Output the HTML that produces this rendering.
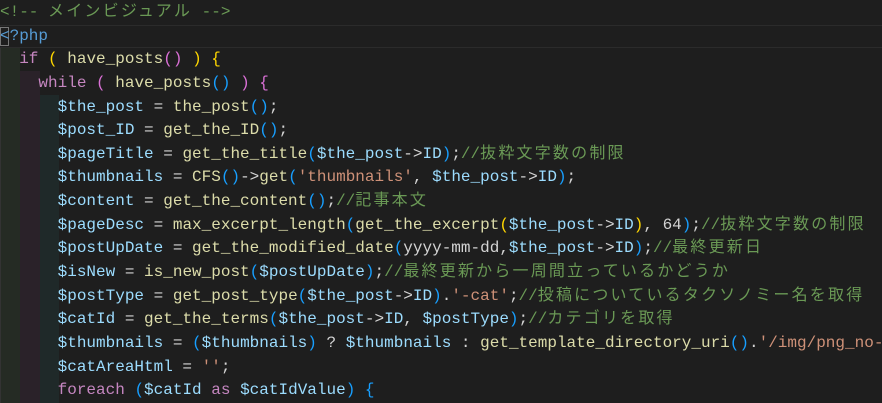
<!DOCTYPE html>
<html><head><meta charset="utf-8"><style>
html,body{margin:0;background:#1e1e1e;width:882px;height:403px;overflow:hidden}
body{position:relative}
.ind{position:absolute;bottom:0}
#code{position:absolute;left:0;top:1px;width:882px;height:402px;overflow:hidden;font:16px/23.65px "Liberation Mono","Noto Sans CJK JP",monospace;color:#d4d4d4}
.l{height:23.65px;white-space:pre;overflow:visible}
.c{color:#6a9955}.v{color:#9cdcfe}.f{color:#dcdcaa}.k{color:#c586c0}.s{color:#ce9178}.t{color:#569cd6}
.y{color:#ffd700}.p{color:#da70d6}.b{color:#179fff}
.j{letter-spacing:2.2px;font-family:"Noto Sans CJK JP",sans-serif;line-height:16px}
</style></head><body>
<div class="ind" style="left:0;width:19px;top:47px;background:#252b24;border-left:1px solid #333"></div>
<div class="ind" style="left:20px;width:20px;top:71px;background:#2a2229"></div>
<div class="ind" style="left:40px;width:19px;top:95px;background:#1f2929"></div>
<div style="position:absolute;left:0;top:25px;width:882px;height:21px;border-top:1px solid #2b2b2b;border-bottom:1px solid #2b2b2b"></div>
<div style="position:absolute;left:0;top:27px;width:9px;height:19px;border:1px solid #777;box-sizing:border-box"></div>
<div id="code"><div class="l c">&lt;!-- <span class="j">メインビジュアル</span> --&gt;</div><div class="l"><span class="t">&lt;?php</span></div><div class="l">  <span class="k">if</span> <span class="y">(</span> <span class="f">have_posts</span><span class="p">()</span> <span class="y">)</span> <span class="y">{</span></div><div class="l">    <span class="k">while</span> <span class="p">(</span> <span class="f">have_posts</span><span class="b">()</span> <span class="p">)</span> <span class="p">{</span></div><div class="l">      <span class="v">$the_post</span> = <span class="f">the_post</span><span class="b">()</span>;</div><div class="l">      <span class="v">$post_ID</span> = <span class="f">get_the_ID</span><span class="b">()</span>;</div><div class="l">      <span class="v">$pageTitle</span> = <span class="f">get_the_title</span><span class="b">(</span><span class="v">$the_post</span>-&gt;<span class="v">ID</span><span class="b">)</span>;<span class="c">//<span class="j">抜粋文字数の制限</span></span></div><div class="l">      <span class="v">$thumbnails</span> = <span class="f">CFS</span><span class="b">()</span>-&gt;<span class="f">get</span><span class="b">(</span><span class="s">'thumbnails'</span>, <span class="v">$the_post</span>-&gt;<span class="v">ID</span><span class="b">)</span>;</div><div class="l">      <span class="v">$content</span> = <span class="f">get_the_content</span><span class="b">()</span>;<span class="c">//<span class="j">記事本文</span></span></div><div class="l">      <span class="v">$pageDesc</span> = <span class="f">max_excerpt_length</span><span class="b">(</span><span class="f">get_the_excerpt</span><span class="y">(</span><span class="v">$the_post</span>-&gt;<span class="v">ID</span><span class="y">)</span>, 64<span class="b">)</span>;<span class="c">//<span class="j">抜粋文字数の制限</span></span></div><div class="l">      <span class="v">$postUpDate</span> = <span class="f">get_the_modified_date</span><span class="b">(</span>yyyy-mm-dd,<span class="v">$the_post</span>-&gt;<span class="v">ID</span><span class="b">)</span>;<span class="c">//<span class="j">最終更新日</span></span></div><div class="l">      <span class="v">$isNew</span> = <span class="f">is_new_post</span><span class="b">(</span><span class="v">$postUpDate</span><span class="b">)</span>;<span class="c">//<span class="j">最終更新から一周間立っているかどうか</span></span></div><div class="l">      <span class="v">$postType</span> = <span class="f">get_post_type</span><span class="b">(</span><span class="v">$the_post</span>-&gt;<span class="v">ID</span><span class="b">)</span>.<span class="s">'-cat'</span>;<span class="c">//<span class="j">投稿についているタクソノミー名を取得</span></span></div><div class="l">      <span class="v">$catId</span> = <span class="f">get_the_terms</span><span class="b">(</span><span class="v">$the_post</span>-&gt;<span class="v">ID</span>, <span class="v">$postType</span><span class="b">)</span>;<span class="c">//<span class="j">カテゴリを取得</span></span></div><div class="l">      <span class="v">$thumbnails</span> = <span class="b">(</span><span class="v">$thumbnails</span><span class="b">)</span> ? <span class="v">$thumbnails</span> : <span class="f">get_template_directory_uri</span><span class="b">()</span>.<span class="s">'/img/png_no-</span></div><div class="l">      <span class="v">$catAreaHtml</span> = <span class="s">''</span>;</div><div class="l">      <span class="k">foreach</span> <span class="b">(</span><span class="v">$catId</span> <span class="k">as</span> <span class="v">$catIdValue</span><span class="b">)</span> <span class="b">{</span></div></div>
</body></html>
